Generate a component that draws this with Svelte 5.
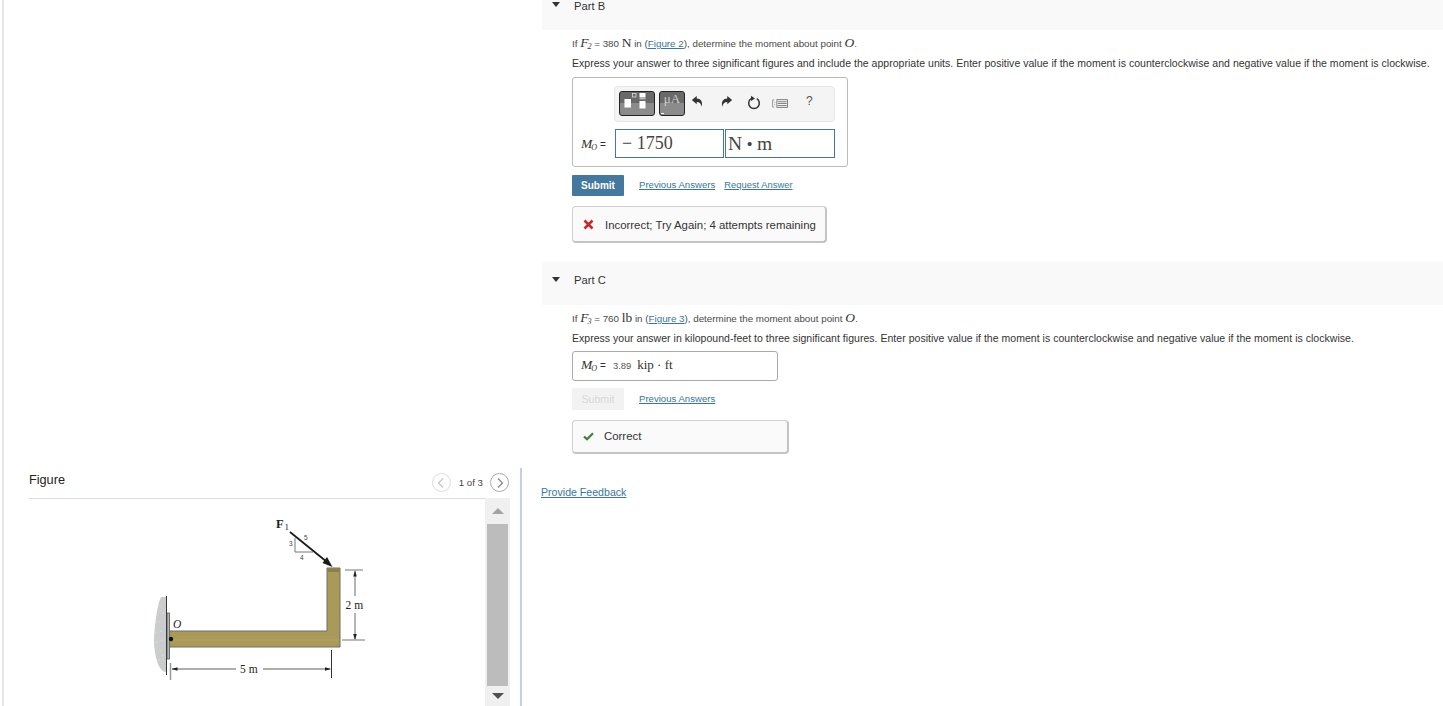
<script lang="ts">
	const expressB =
		'Express your answer to three significant figures and include the appropriate units. Enter positive value if the moment is counterclockwise and negative value if the moment is clockwise.';
	const expressC =
		'Express your answer in kilopound-feet to three significant figures. Enter positive value if the moment is counterclockwise and negative value if the moment is clockwise.';
	// speckles on the wall
	const specks = [[158, 622], [161, 631], [157, 642], [160, 650], [163, 613], [159, 660], [162, 640], [156, 633], [163, 655], [160, 606]];
</script>

<div class="page">
	<aside class="left">
		<section class="figure-pane">
			<header class="figure-head">
				<span class="figure-title">Figure</span>
				<div class="pager">
					<span class="round dim">
						<svg width="10" height="12" viewBox="0 0 10 12"><path d="M7 1.500 2.500 6 7 10.500" fill="none" stroke="#c8c8c8" stroke-width="1.400" /></svg>
					</span>
					<span class="count">1 of 3</span>
					<span class="round">
						<svg width="10" height="12" viewBox="0 0 10 12"><path d="M3 1.500 7.500 6 3 10.500" fill="none" stroke="#888" stroke-width="1.300" /></svg>
					</span>
				</div>
			</header>
			<div class="figure-body">
				<div class="diagram">
					<svg width="240" height="200" viewBox="140 505 240 200">
						<defs>
							<filter id="soft" x="-20%" y="-5%" width="140%" height="110%"><feGaussianBlur stdDeviation="0.700" /></filter>
						</defs>
						<!-- wall -->
						<path d="M161 597C158 604 157 610 156 618 155 626 154 632 154 640 154 650 156 658 158 664 160 669 163 672 166 672V597Z" fill="#cbccce" filter="url(#soft)" />
						{#each specks as [x, y]}
							<circle cx={x} cy={y} r=".6" fill="#eee" />
						{/each}
						<path d="M166.500 596V675" stroke="#333" stroke-width="1" />
						<rect x="167" y="613" width="2.500" height="46" fill="#b5b5b5" stroke="#444" stroke-width=".7" />
						<!-- bar -->
						<path d="M169.500 631H327V568H340V647H169.500Z" fill="#a99a5a" stroke="#6e6e62" stroke-width="1" />
						<path d="M328 569H339V572H328Z" fill="#8d7f45" />
						<path d="M170 640H339" stroke="#ae9f5e" stroke-width="2" />
						<circle cx="171" cy="639" r="2.200" fill="#111" />
						<text x="173" y="628" class="serif italic" font-size="11.500">O</text>
						<!-- 5 m -->
						<path d="M170.500 663V680" stroke="#999" stroke-width="1.500" />
						<path d="M172 669H236M263 669H330" stroke="#333" stroke-width=".8" />
						<path d="M171.500 669l6-1.800v3.600zM331 669l-6-1.800v3.600z" fill="#222" />
						<path d="M331.500 650V678" stroke="#333" stroke-width="1" />
						<text x="240" y="672.500" class="serif" font-size="11.500">5 m</text>
						<!-- 2 m -->
						<path d="M345 570H363M342 640H365" stroke="#777" stroke-width="1" />
						<path d="M355 571V596M355 613V639" stroke="#444" stroke-width=".8" />
						<path d="M355 570.500l-1.800 6h3.600zM355 640l-1.800-6h3.600z" fill="#222" />
						<text x="345.500" y="608.500" class="serif" font-size="11.500">2 m</text>
						<!-- force -->
						<path d="M295 538V552H313" fill="none" stroke="#777" stroke-width="1" />
						<path d="M290 532 327 562" stroke="#1a1a1a" stroke-width="1.700" />
						<path d="M332.500 567 322.500 563 327 557Z" fill="#1a1a1a" />
						<text x="276" y="528" class="serif bold" font-size="12.500">F</text>
						<text x="284.500" y="530" class="serif" font-size="9">1</text>
						<text x="289" y="546" class="small" font-size="6.500">3</text>
						<text x="304" y="540" class="small" font-size="6.500">5</text>
						<text x="300" y="560" class="small" font-size="6.500">4</text>
					</svg>
				</div>
				<div class="scrollbar">
					<div class="arrow-zone top"><span class="arrow up"></span></div>
					<div class="thumb"></div>
					<div class="arrow-zone bottom"><span class="arrow down"></span></div>
				</div>
			</div>
		</section>
	</aside>

	<main class="right">
		<div class="part-bar part-b"><span class="caret"></span>Part B</div>
		<div class="part-content">
			<p class="prompt">
				If <span class="tex it">F<sub>2</sub></span> = 380 <span class="tex">N</span> in (<a href="#fig2">Figure 2</a>), determine the moment about point <span class="tex it">O</span>.
			</p>
			<p class="express">{expressB}</p>

			<div class="answer-box">
				<div class="toolbar">
					<span class="tool">
						<svg width="34" height="23" viewBox="0 0 34 23">
							<rect x="4.500" y="7" width="6.500" height="8.500" fill="#fff" />
							<rect x="12.500" y="1.500" width="3.500" height="3.500" fill="none" stroke="#ddd" stroke-width=".8" />
							<rect x="19.500" y="1" width="6" height="4.500" fill="#fff" />
							<rect x="19.500" y="6.300" width="6" height="1" fill="#ddd" />
							<rect x="19.500" y="9" width="6" height="7.500" fill="#fff" />
						</svg>
					</span>
					<span class="tool mu"><span>μA</span><i></i></span>
					<span class="icon undo">
						<svg width="13" height="13" viewBox="0 0 12 12"><path d="M.8 4.500 5.300 1v2.300c3.500 0 5.700 2.500 4.700 7.500C9.300 8 8 6.500 5.300 6.400V8.500Z" fill="#333" /></svg>
					</span>
					<span class="icon redo">
						<svg width="13" height="13" viewBox="0 0 12 12"><path d="M11.200 4.500 6.700 1v2.300c-3.500 0-5.700 2.500-4.700 7.500C2.700 8 4 6.500 6.700 6.400V8.500Z" fill="#333" /></svg>
					</span>
					<span class="icon reset">
						<svg width="14" height="15" viewBox="0 0 14 15"><path d="M9.800 3.700A5.300 5.300 0 1 1 4.200 3.700" fill="none" stroke="#333" stroke-width="1.500" /><path d="M4 .8V6L8 3.400Z" fill="#333" /></svg>
					</span>
					<span class="icon keys">
						<svg width="16" height="9" viewBox="0 0 18 10">
							<path d="M2.500 1H.7V9H2.500" fill="none" stroke="#777" stroke-width=".8" />
							<path d="M3.200 3.500v.8M3.200 6v.8" stroke="#777" stroke-width=".9" />
							<rect x="5.500" y=".7" width="12" height="8.600" fill="none" stroke="#666" stroke-width=".9" />
							<path d="M6.500 3H16.500M6.500 5H16.500M6.500 7.300H16.500" stroke="#777" stroke-width="1" />
						</svg>
					</span>
					<span class="help">?</span>
				</div>
				<div class="answer-row">
					<span class="math-label"><span class="tex it">M<sub>O</sub></span> =</span>
					<div class="field value">− 1750</div>
					<div class="field units">N <b>•</b> m</div>
				</div>
			</div>

			<div class="actions">
				<button class="submit">Submit</button>
				<a href="#prev">Previous Answers</a>
				<a href="#req" class="second">Request Answer</a>
			</div>

			<div class="feedback wrong">
				<svg width="11" height="11" viewBox="0 0 11 11"><path d="M1.500 1.500 9.500 9.500M9.500 1.500 1.500 9.500" stroke="#c22b2b" stroke-width="2.600" /></svg>
				<span>Incorrect; Try Again; 4 attempts remaining</span>
			</div>
		</div>

		<div class="part-bar part-c"><span class="caret"></span>Part C</div>
		<div class="part-content">
			<p class="prompt">
				If <span class="tex it">F<sub>3</sub></span> = 760 <span class="tex">lb</span> in (<a href="#fig3">Figure 3</a>), determine the moment about point <span class="tex it">O</span>.
			</p>
			<p class="express">{expressC}</p>

			<div class="answer-done">
				<span class="math-label"><span class="tex it">M<sub>O</sub></span> =</span>
				<span class="done-value">3.89</span>
				<span class="tex done-units">kip · ft</span>
			</div>

			<div class="actions c">
				<button class="submit" disabled>Submit</button>
				<a href="#prev">Previous Answers</a>
			</div>

			<div class="feedback right-answer">
				<svg width="11" height="9" viewBox="0 0 11 9"><path d="M1 4.500 4 7.300 10 1.200" fill="none" stroke="#3f7f3a" stroke-width="2.200" /></svg>
				<span>Correct</span>
			</div>
		</div>

		<a class="provide" href="#feedback">Provide Feedback</a>
	</main>
</div>

<style>
	:global(body) {
		margin: 0;
		background: #fff;
	}
	.page {
		display: flex;
		height: 706px;
		overflow: hidden;
		font-family: 'Liberation Sans', Arial, sans-serif;
		color: #333;
	}
	a {
		color: #38769b;
	}

	/* figure side */
	.left {
		box-sizing: border-box;
		width: 520px;
		margin-left: 2px;
		flex: none;
		display: flex;
		flex-direction: column;
		justify-content: flex-end;
		border-left: 2px solid #e6e6e6;
	}
	.figure-pane {
		box-sizing: border-box;
		height: 238px;
		border-right: 2px solid #c3cfe2;
		padding-left: 25px;
	}
	.figure-head {
		box-sizing: border-box;
		width: 481px;
		height: 31px;
		display: flex;
		align-items: center;
		justify-content: space-between;
		border-bottom: 1px solid #ddd;
		padding: 7px 1px 13px 0;
	}
	.figure-title {
		font-size: 12.7px;
		color: #222;
	}
	.pager {
		display: flex;
		align-items: center;
		margin-top: 5px;
	}
	.round {
		box-sizing: border-box;
		width: 19px;
		height: 19px;
		border: 1px solid #aaa;
		border-radius: 50%;
		display: flex;
		align-items: center;
		justify-content: center;
	}
	.round.dim {
		border-color: #ddd;
	}
	.count {
		font-size: 9.7px;
		margin: 0 7px 0 8px;
		color: #444;
	}
	.figure-body {
		display: flex;
		width: 481px;
		height: 207px;
	}
	.diagram {
		width: 456px;
		flex: none;
		padding-top: 6px;
		padding-left: 111px;
		box-sizing: border-box;
	}
	.diagram svg {
		display: block;
	}
	.serif {
		font-family: 'Liberation Serif', serif;
		fill: #222;
	}
	.italic {
		font-style: italic;
	}
	.bold {
		font-weight: bold;
	}
	.small {
		font-family: 'Liberation Sans', sans-serif;
		fill: #444;
	}
	.scrollbar {
		width: 25px;
		flex: none;
		margin-top: -1px;
		background: #f0f0f0;
		display: flex;
		flex-direction: column;
		position: relative;
	}
	.arrow-zone {
		display: flex;
		justify-content: center;
		align-items: center;
	}
	.arrow-zone.top {
		height: 26px;
	}
	.arrow-zone.bottom {
		height: 20px;
	}
	.thumb {
		height: 162px;
		margin: 0 2px;
		background: #bcbcbc;
	}
	.arrow {
		width: 0;
		height: 0;
		border-left: 6px solid transparent;
		border-right: 6px solid transparent;
	}
	.arrow.up {
		border-bottom: 6px solid #a3a3a3;
	}
	.arrow.down {
		border-top: 6px solid #505050;
	}

	/* parts */
	.right {
		flex: 1;
		padding-left: 20px;
		min-width: 0;
	}
	.part-bar {
		background: #f9f9f9;
		display: flex;
		font-size: 11.2px;
		color: #333;
		padding-left: 32px;
		position: relative;
		box-sizing: border-box;
	}
	.part-b {
		height: 30px;
		line-height: 12px;
	}
	.part-c {
		height: 43px;
		margin-top: 19px;
		padding-top: 12px;
		line-height: 12px;
	}
	.caret {
		position: absolute;
		left: 10px;
		width: 0;
		height: 0;
		border-left: 4.500px solid transparent;
		border-right: 4.500px solid transparent;
		border-top: 5px solid #333;
	}
	.part-b .caret {
		top: 2px;
	}
	.part-c .caret {
		top: 15px;
	}
	.part-content {
		padding-left: 30px;
	}
	.prompt,
	.express {
		margin: 0;
		height: 14px;
		line-height: 14px;
		white-space: nowrap;
	}
	.prompt {
		font-size: 9.8px;
		color: #4a4a4a;
		padding-top: 6px;
	}
	.express {
		margin-top: 6px;
		font-size: 10.5px;
		letter-spacing: 0.03px;
		color: #333;
	}
	.tex {
		font-family: 'Liberation Serif', serif;
		font-size: 13.500px;
		color: #333;
	}
	.it {
		font-style: italic;
	}
	sub {
		font-size: 60%;
		line-height: 0;
		vertical-align: -2px;
		margin-left: -1px;
	}

	/* answer */
	.answer-box {
		box-sizing: border-box;
		width: 276px;
		height: 90px;
		margin-top: 7px;
		border: 1px solid #bbb;
		border-radius: 3px;
		padding-top: 8px;
		padding-left: 41px;
	}
	.toolbar {
		box-sizing: border-box;
		width: 221px;
		height: 36px;
		background: #f4f4f4;
		border: 1px solid #e6e6e6;
		border-radius: 4px;
		display: flex;
		align-items: flex-start;
		padding: 4px 0 0 4px;
	}
	.tool {
		box-sizing: border-box;
		width: 36px;
		height: 25px;
		border: 1px solid #222;
		border-radius: 3px;
		background: linear-gradient(#696969 0, #696969 50%, #8b8b8b 50%, #8b8b8b 100%);
		display: block;
		flex: none;
	}
	.tool svg {
		display: block;
	}
	.mu {
		width: 26px;
		margin-left: 4px;
		position: relative;
		font-family: 'Liberation Serif', serif;
		font-size: 13px;
		color: #cfcfcf;
		text-align: center;
		line-height: 14px;
	}
	.mu i {
		position: absolute;
		left: 1px;
		bottom: 1px;
		width: 3px;
		height: 1px;
		background: #fff;
	}
	.icon {
		height: 20px;
		display: flex;
		align-items: center;
		justify-content: center;
		flex: none;
	}
	.undo {
		margin-left: 6px;
	}
	.redo {
		margin-left: 16px;
	}
	.reset {
		margin-left: 14px;
		height: 22px;
	}
	.keys {
		margin-left: 11px;
		height: 24px;
	}
	.help {
		margin-left: 18px;
		font-size: 12px;
		line-height: 20px;
		color: #555;
	}
	.answer-row {
		display: flex;
		align-items: center;
		margin-top: 7px;
		margin-left: -33px;
	}
	.math-label {
		font-size: 10px;
		color: #333;
		width: 34px;
		flex: none;
		white-space: nowrap;
	}
	.field {
		box-sizing: border-box;
		height: 29px;
		border: 1px solid #44789c;
		font-family: 'Liberation Serif', serif;
		font-size: 18px;
		line-height: 27px;
		color: #444;
		flex: none;
	}
	.value {
		width: 109px;
		padding-left: 6px;
	}
	.units {
		width: 110px;
		margin-left: 1px;
		padding-left: 2px;
		font-size: 19.500px;
	}
	.units b {
		font-size: 15px;
		vertical-align: 1px;
	}
	.actions {
		display: flex;
		align-items: center;
		height: 21px;
		margin-top: 8px;
		font-size: 9.6px;
	}
	.actions a {
		margin-left: 15px;
		padding-bottom: 2px;
	}
	.actions a.second {
		margin-left: 9px;
		font-size: 9.4px;
	}
	.submit {
		box-sizing: border-box;
		width: 52px;
		height: 21px;
		border: none;
		border-radius: 1px;
		padding: 0;
		background: #44789c;
		color: #fff;
		font-family: inherit;
		font-size: 10px;
		font-weight: bold;
		flex: none;
	}
	.submit:disabled {
		background: #f2f2f2;
		color: #d8d8d8;
		font-size: 10.6px;
		font-weight: normal;
		height: 22px;
	}
	.feedback {
		box-sizing: border-box;
		display: flex;
		align-items: center;
		background: #fafafa;
		border: 1px solid #d0d0d0;
		border-right: 2px solid #c4c4c4;
		border-bottom: 2px solid #c4c4c4;
		border-radius: 4px;
		font-size: 11.400px;
		color: #333;
		margin-top: 10px;
	}
	.wrong {
		width: 255px;
		height: 37px;
		padding: 1px 0 0 10px;
		gap: 11px;
	}
	.right-answer {
		width: 217px;
		height: 34px;
		padding: 0 0 1px 10px;
		gap: 10px;
	}
	.answer-done {
		box-sizing: border-box;
		width: 206px;
		height: 30px;
		margin-top: 6px;
		border: 1px solid #aaa;
		border-radius: 3px;
		display: flex;
		align-items: center;
		padding: 0 0 2px 8px;
	}
	.answer-done .math-label {
		width: 32px;
	}
	.done-value {
		font-size: 9.400px;
		color: #555;
		margin-right: 6px;
	}
	.done-units {
		font-size: 13px;
	}
	.actions.c {
		height: 22px;
		margin-top: 7px;
	}
	.provide {
		display: block;
		width: max-content;
		margin: 31px 0 0 -1px;
		font-size: 10.600px;
		line-height: 14px;
	}
</style>
